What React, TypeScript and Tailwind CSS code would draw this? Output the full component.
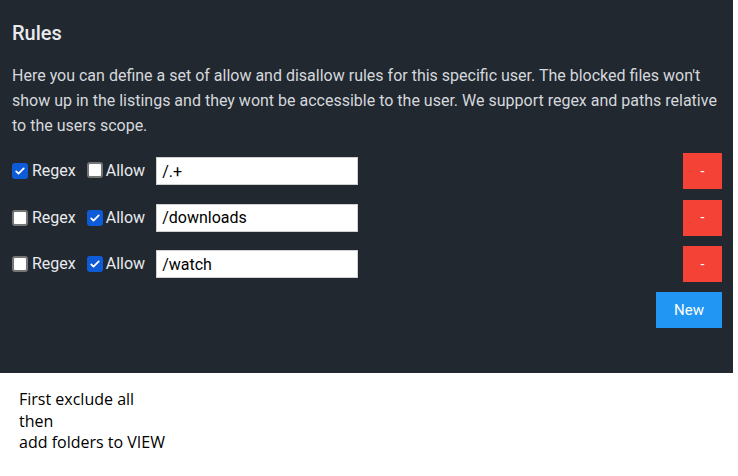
import { useState } from "react";

type Rule = { regex: boolean; allow: boolean; path: string };

function Check({ checked, onChange }: { checked: boolean; onChange: () => void }) {
  return (
    <button
      onClick={onChange}
      className={
        checked
          ? "w-4 h-4 rounded-[3px] bg-[#0d5bd7] flex items-center justify-center shrink-0"
          : "w-4 h-4 rounded-[3px] bg-white border-2 border-[#767676] shrink-0"
      }
    >
      {checked && (
        <svg viewBox="0 0 16 16" className="w-3 h-3">
          <path d="M3 8.5l3 3 7-7" fill="none" stroke="white" strokeWidth="2.4" strokeLinecap="round" strokeLinejoin="round" />
        </svg>
      )}
    </button>
  );
}

export default function App() {
  const [rules, setRules] = useState<Rule[]>([
    { regex: true, allow: false, path: "/.+" },
    { regex: false, allow: true, path: "/downloads" },
    { regex: false, allow: true, path: "/watch" },
  ]);

  const update = (i: number, patch: Partial<Rule>) =>
    setRules(rules.map((r, j) => (j === i ? { ...r, ...patch } : r)));

  return (
    <div className="w-[738px] h-[476px] bg-white">
      {/* Rules card */}
      <div className="w-[733px] h-[373px] bg-[#212830] pl-3 pr-[11px] pt-[19px] font-['Roboto',sans-serif]">
        <h2 className="text-[20px] leading-[28px] font-medium text-[#e8eaed]">Rules</h2>
        <p className="mt-[16px] text-[16px] leading-[25px] text-[#d5d8dc] whitespace-nowrap">
          Here you can define a set of allow and disallow rules for this specific user. The blocked files won't
          <br />
          show up in the listings and they wont be accessible to the user. We support regex and paths relative
          <br />
          to the users scope.
        </p>

        <div className="mt-[15px] flex flex-col gap-[10.5px]">
          {rules.map((r, i) => (
            <div key={i} className="flex items-center h-9">
              <Check checked={r.regex} onChange={() => update(i, { regex: !r.regex })} />
              <span className="ml-1 text-[16px] text-[#e8eaed]">Regex</span>
              <div className="ml-[11px]">
                <Check checked={r.allow} onChange={() => update(i, { allow: !r.allow })} />
              </div>
              <span className="ml-[3px] text-[16px] text-[#e8eaed]">Allow</span>
              <input
                value={r.path}
                onChange={(e) => update(i, { path: e.target.value })}
                className="ml-[11px] w-[202px] h-[28px] bg-white border border-[#d0d0d0] px-[5px] text-[16px] text-black outline-none"
              />
              <button
                onClick={() => setRules(rules.filter((_, j) => j !== i))}
                className="ml-auto w-[39px] h-9 bg-[#f44336] text-white text-[14px]"
              >
                -
              </button>
            </div>
          ))}
        </div>

        <div className="mt-[10px] flex justify-end">
          <button
            onClick={() => setRules([...rules, { regex: false, allow: false, path: "" }])}
            className="w-[66px] h-9 bg-[#2196f3] text-white text-[15px]"
          >
            New
          </button>
        </div>
      </div>

      {/* Notes */}
      <div className="pl-[19px] pt-4 text-[16px] leading-[21.5px] text-black font-['Open_Sans',sans-serif]">
        <div>First exclude all</div>
        <div>then</div>
        <div>add folders to VIEW</div>
      </div>
    </div>
  );
}
